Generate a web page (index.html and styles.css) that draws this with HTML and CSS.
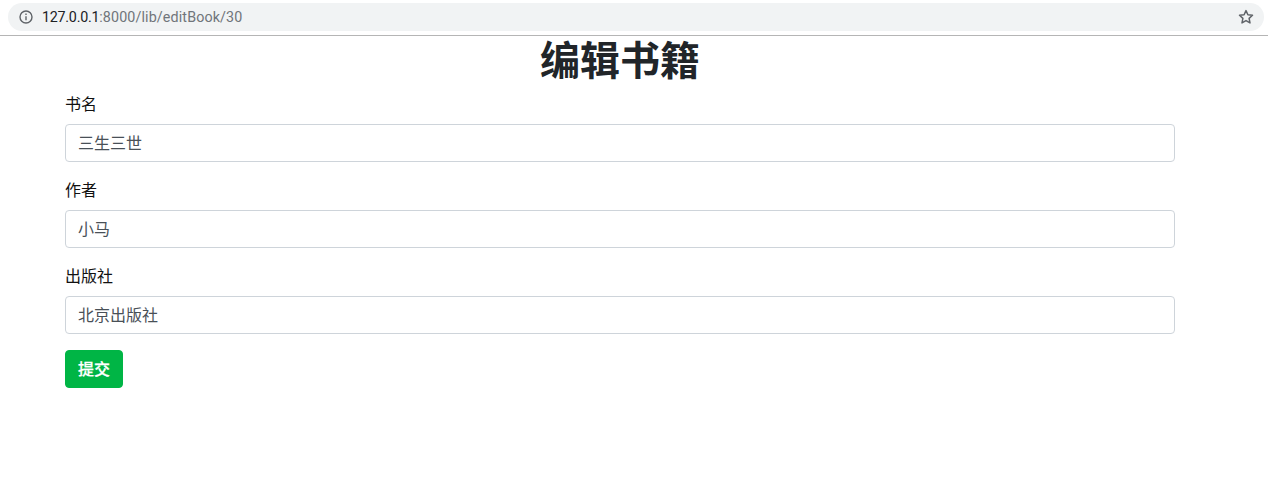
FILE: index.html
```html
<!DOCTYPE html>
<html lang="zh">
<head>
<meta charset="utf-8">
<title>编辑书籍</title>
<link rel="stylesheet" href="styles.css">
</head>
<body>
<header class="chrome">
  <div class="omnibox">
    <svg class="info" width="14" height="14" viewBox="0 0 14 14" fill="none" stroke="#5f6368" stroke-width="1.4"><circle cx="7" cy="7" r="6"/><path d="M7 6.2v4"/><path d="M7 3.4v1.5"/></svg>
    <span class="url"><span class="host">127.0.0.1</span>:8000/lib/editBook/30</span>
    <svg class="star" width="16" height="16" viewBox="0 0 16 16" fill="none" stroke="#5f6368" stroke-width="1.5" stroke-linejoin="round"><path d="M8 1.6l1.9 4.2 4.6.5-3.4 3.1.9 4.5-4-2.3-4 2.3.9-4.5-3.4-3.1 4.6-.5z"/></svg>
  </div>
</header>
<main class="container">
  <h1 class="title">编辑书籍</h1>
  <form class="book-form">
    <div class="field">
      <label class="field-label">书名</label>
      <input class="field-input" type="text" value="三生三世">
    </div>
    <div class="field">
      <label class="field-label">作者</label>
      <input class="field-input" type="text" value="小马">
    </div>
    <div class="field">
      <label class="field-label">出版社</label>
      <input class="field-input" type="text" value="北京出版社">
    </div>
    <button class="submit" type="button">提交</button>
  </form>
</main>
</body>
</html>
```
FILE: styles.css
```css
* { box-sizing: border-box; }
html, body { margin: 0; padding: 0; background: #fff; }
body {
  font-family: "Liberation Sans", "Noto Sans CJK SC", sans-serif;
  font-size: 16px;
  line-height: 1.5;
  color: #212529;
  height: 490px;
  overflow: hidden;
}
.chrome {
  height: 36px;
  padding: 3px 4px 0 8px;
  border-bottom: 1px solid #b5b5b5;
}
.omnibox {
  height: 28px;
  background: #f1f3f4;
  border-radius: 14px;
  display: flex;
  align-items: center;
  padding: 0 10px 0 11px;
}
.info { flex: none; }
.url {
  margin-left: 9px;
  padding-top: 1px;
  font-family: "Roboto", "Liberation Sans", sans-serif;
  font-size: 14.3px;
  letter-spacing: 0.12px;
  color: #70757a;
  flex: 1;
}
.host { color: #202124; letter-spacing: -0.25px; }
.container {
  width: 1140px;
  padding: 0 15px;
  margin-left: 50px;
}
.title {
  margin: 0 0 7px;
  padding-top: 1px;
  font-size: 40px;
  line-height: 48px;
  font-weight: 700;
  text-align: center;
}
.field { margin-bottom: 16px; }
.field-label {
  display: block;
  margin-bottom: 7px;
  padding-top: 1px;
  color: #111;
  line-height: 24px;
}
.field-input {
  display: block;
  width: 100%;
  height: 38px;
  padding: 5px 12px 7px;
  font: inherit;
  color: #495057;
  background: #fff;
  border: 1px solid #ced4da;
  border-radius: 4px;
}
.submit {
  display: block;
  height: 38px;
  padding: 7px 12px 5px;
  font: inherit;
  font-weight: 500;
  -webkit-text-stroke: 0.25px #fff;
  color: #fff;
  background: #00b545;
  border: 1px solid #00b545;
  border-radius: 4px;
}
```
